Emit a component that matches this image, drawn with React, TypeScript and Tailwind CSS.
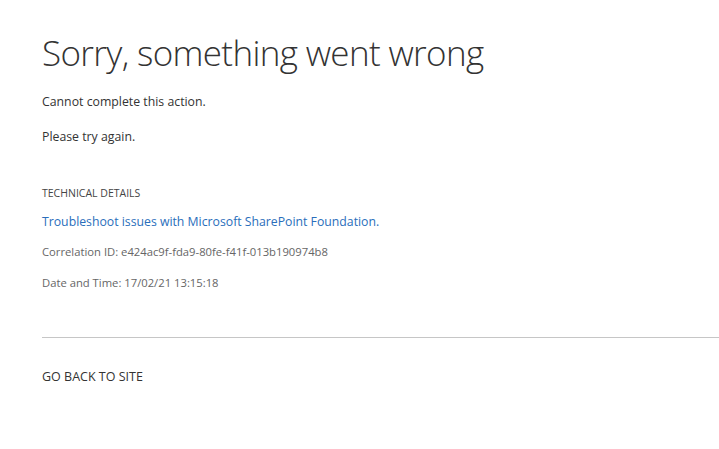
import React from 'react';

export default function App() {
  return (
    <div className="min-h-screen bg-white text-[#333333] font-['Open_Sans',_'Noto_Sans',_sans-serif] overflow-hidden">
      <div className="pl-[42px] pt-[30px]">
        {/* Heading */}
        <h1 className="text-[35px] font-light leading-[46px] tracking-[-0.65px] text-[#333333]">
          Sorry, something went wrong
        </h1>

        {/* Message */}
        <p className="mt-[17px] text-[12.3px] leading-[18px]">Cannot complete this action.</p>
        <p className="mt-[17px] text-[12.3px] leading-[18px]">Please try again.</p>

        {/* Technical details */}
        <div className="mt-[40px]">
          <div className="text-[10.5px] leading-[14px] text-[#444444]">TECHNICAL DETAILS</div>
          <a href="#" className="block mt-[13px] text-[12.25px] leading-[18px] text-[#2a6ebb]">
            Troubleshoot issues with Microsoft SharePoint Foundation.
          </a>
          <div className="mt-[12px] text-[11.25px] leading-[18px] text-[#666666]">
            Correlation ID: e424ac9f-fda9-80fe-f41f-013b190974b8
          </div>
          <div className="mt-[13px] text-[11.25px] leading-[18px] text-[#666666]">Date and Time: 17/02/21 13:15:18</div>
        </div>

        {/* Footer */}
        <div className="mt-[45px] border-t border-[#c6c6c6]" />
        <div className="mt-[30px] text-[12.5px] leading-[18px] text-[#333333]">GO BACK TO SITE</div>
      </div>
    </div>
  );
}
